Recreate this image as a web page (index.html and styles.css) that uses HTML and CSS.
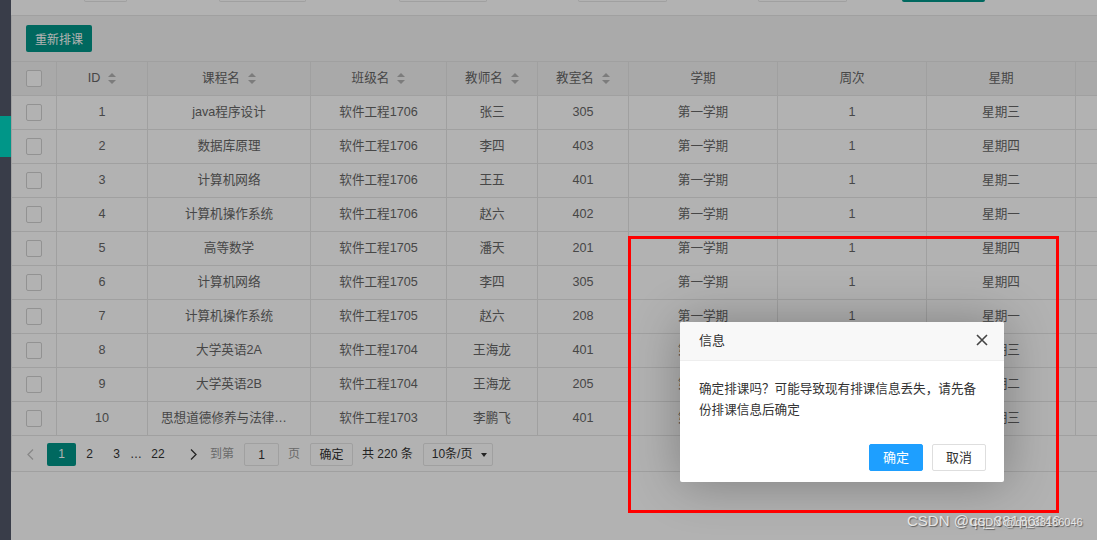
FILE: index.html
```html
<!DOCTYPE html>
<html lang="zh-CN">
<head>
    <meta charset="UTF-8">
    <title>排课管理</title>
    <link rel="stylesheet" href="styles.css">
</head>
<body>

<!-- left nav (outside the dialog's shade) -->
<aside class="sidebar"><div class="side-active"></div></aside>

<main class="content">
    <!-- bottom of the search form, scrolled away -->
    <div class="top-strip">
        <span class="edge edge-a"></span>
        <span class="edge edge-b"></span>
        <span class="edge edge-c"></span>
        <span class="edge edge-d"></span>
        <span class="edge edge-e"></span>
        <span class="edge-btn"></span>
    </div>

    <div class="table-box">
        <div class="toolbar"><button class="btn-teal">重新排课</button></div>

        <div class="row head">
            <div class="cell check"><span class="checkbox"></span></div>
            <div class="cell th">ID<span class="sort"></span></div>
            <div class="cell th">课程名<span class="sort"></span></div>
            <div class="cell th">班级名<span class="sort"></span></div>
            <div class="cell th">教师名<span class="sort"></span></div>
            <div class="cell th">教室名<span class="sort"></span></div>
            <div class="cell th">学期</div>
            <div class="cell th">周次</div>
            <div class="cell th">星期</div>
            <div class="cell th"></div>
        </div>

        <div class="row">
            <div class="cell check"><span class="checkbox"></span></div>
            <div class="cell">1</div><div class="cell">java程序设计</div><div class="cell">软件工程1706</div><div class="cell">张三</div><div class="cell">305</div><div class="cell">第一学期</div><div class="cell">1</div><div class="cell">星期三</div><div class="cell"></div>
        </div>
        <div class="row">
            <div class="cell check"><span class="checkbox"></span></div>
            <div class="cell">2</div><div class="cell">数据库原理</div><div class="cell">软件工程1706</div><div class="cell">李四</div><div class="cell">403</div><div class="cell">第一学期</div><div class="cell">1</div><div class="cell">星期四</div><div class="cell"></div>
        </div>
        <div class="row">
            <div class="cell check"><span class="checkbox"></span></div>
            <div class="cell">3</div><div class="cell">计算机网络</div><div class="cell">软件工程1706</div><div class="cell">王五</div><div class="cell">401</div><div class="cell">第一学期</div><div class="cell">1</div><div class="cell">星期二</div><div class="cell"></div>
        </div>
        <div class="row">
            <div class="cell check"><span class="checkbox"></span></div>
            <div class="cell">4</div><div class="cell">计算机操作系统</div><div class="cell">软件工程1706</div><div class="cell">赵六</div><div class="cell">402</div><div class="cell">第一学期</div><div class="cell">1</div><div class="cell">星期一</div><div class="cell"></div>
        </div>
        <div class="row">
            <div class="cell check"><span class="checkbox"></span></div>
            <div class="cell">5</div><div class="cell">高等数学</div><div class="cell">软件工程1705</div><div class="cell">潘天</div><div class="cell">201</div><div class="cell">第一学期</div><div class="cell">1</div><div class="cell">星期四</div><div class="cell"></div>
        </div>
        <div class="row">
            <div class="cell check"><span class="checkbox"></span></div>
            <div class="cell">6</div><div class="cell">计算机网络</div><div class="cell">软件工程1705</div><div class="cell">李四</div><div class="cell">305</div><div class="cell">第一学期</div><div class="cell">1</div><div class="cell">星期四</div><div class="cell"></div>
        </div>
        <div class="row">
            <div class="cell check"><span class="checkbox"></span></div>
            <div class="cell">7</div><div class="cell">计算机操作系统</div><div class="cell">软件工程1705</div><div class="cell">赵六</div><div class="cell">208</div><div class="cell">第一学期</div><div class="cell">1</div><div class="cell">星期一</div><div class="cell"></div>
        </div>
        <div class="row">
            <div class="cell check"><span class="checkbox"></span></div>
            <div class="cell">8</div><div class="cell">大学英语2A</div><div class="cell">软件工程1704</div><div class="cell">王海龙</div><div class="cell">401</div><div class="cell">第一学期</div><div class="cell">1</div><div class="cell">星期三</div><div class="cell"></div>
        </div>
        <div class="row">
            <div class="cell check"><span class="checkbox"></span></div>
            <div class="cell">9</div><div class="cell">大学英语2B</div><div class="cell">软件工程1704</div><div class="cell">王海龙</div><div class="cell">205</div><div class="cell">第一学期</div><div class="cell">1</div><div class="cell">星期二</div><div class="cell"></div>
        </div>
        <div class="row">
            <div class="cell check"><span class="checkbox"></span></div>
            <div class="cell">10</div><div class="cell">思想道德修养与法律基础</div><div class="cell">软件工程1703</div><div class="cell">李鹏飞</div><div class="cell">401</div><div class="cell">第一学期</div><div class="cell">1</div><div class="cell">星期三</div><div class="cell"></div>
        </div>

        <!-- pagination -->
        <div class="pager">
            <span class="pg-prev"><svg width="7" height="11" viewBox="0 0 7 11"><path d="M6 0.5L1 5.5L6 10.5" fill="none" stroke="#c2c2c2" stroke-width="1.3"/></svg></span>
            <span class="pg-cur">1</span>
            <span class="pg-num">2</span>
            <span class="pg-num">3</span>
            <span class="pg-dots">…</span>
            <span class="pg-num pg-last">22</span>
            <span class="pg-next"><svg width="7" height="11" viewBox="0 0 7 11"><path d="M1 0.5L6 5.5L1 10.5" fill="none" stroke="#333" stroke-width="1.3"/></svg></span>
            <span class="pg-label">到第</span>
            <span class="pg-input">1</span>
            <span class="pg-label pg-page">页</span>
            <span class="pg-go">确定</span>
            <span class="pg-count">共 220 条</span>
            <span class="pg-select">10条/页<i class="caret"></i></span>
        </div>
    </div>

    <div class="shade"></div>
</main>

<!-- confirm dialog -->
<div class="dialog">
    <div class="dialog-title">
        <span>信息</span>
        <svg class="dialog-close" width="12" height="12" viewBox="0 0 12 12"><path d="M1 1L11 11M11 1L1 11" stroke="#444" stroke-width="1.6"/></svg>
    </div>
    <div class="dialog-body">确定排课吗？可能导致现有排课信息丢失，请先备份排课信息后确定</div>
    <div class="dialog-btns">
        <span class="btn-ok">确定</span>
        <span class="btn-cancel">取消</span>
    </div>
</div>

<div class="mark-box"></div>
<div class="watermark"><span>CSDN @qq_38186046</span><span class="wm-2">CSDN @qq_38186046</span></div>

</body>
</html>
```

FILE: styles.css
```css
* { box-sizing: border-box; }
body { margin: 0; height: 540px; overflow: hidden; display: flex; background: #fff; font-family: "Liberation Sans", "Noto Sans CJK SC", sans-serif; font-size: 12.6px; color: #666; }

.sidebar { width: 11px; flex: none; background: #393D49; }
.side-active { margin-top: 116px; height: 41px; background: #009688; }

.content { position: relative; flex: 1; overflow: hidden; }

.top-strip { height: 15px; display: flex; align-items: flex-start; }
.edge { height: 2px; border: 1px solid #e6e6e6; border-top: none; border-radius: 0 0 2px 2px; }
.edge-a { margin-left: 73px; width: 43px; }
.edge-b { margin-left: 92px; width: 87px; }
.edge-c { margin-left: 93px; width: 88px; }
.edge-d { margin-left: 91px; width: 89px; }
.edge-e { margin-left: 91px; width: 89px; }
.edge-btn { margin-left: 55px; width: 83px; height: 2px; background: #009688; border-radius: 0 0 2px 2px; }

.table-box { border-left: 1px solid #e6e6e6; overflow: hidden; }
.toolbar { padding: 9px 14px; border-top: 1px solid #e6e6e6; border-bottom: 1px solid #e6e6e6; background: #f4f4f4; }
.btn-teal { display: block; height: 27px; padding: 0 9px; border: none; border-radius: 2px; background: #009688; color: #fff; font-family: inherit; font-size: 12px; }

.row { display: grid; grid-template-columns: 45px 91px 163px 136px 91px 91px 149px 149px 149px 149px; border-bottom: 1px solid #e6e6e6; background: #fff; }
.row.head { background: #f2f2f2; }
.cell { height: 33px; line-height: 33px; padding: 0 13px; border-right: 1px solid #e6e6e6; text-align: center; white-space: nowrap; overflow: hidden; text-overflow: ellipsis; }
.cell.th { display: flex; align-items: center; justify-content: center; gap: 8px; }
.cell.check { display: flex; align-items: center; justify-content: center; padding: 0; }
.checkbox { width: 16px; height: 17px; border: 1px solid #d2d2d2; border-radius: 2px; background: #fff; }

.sort { display: inline-flex; flex-direction: column; gap: 3px; }
.sort::before, .sort::after { content: ""; border: 4px solid transparent; }
.sort::before { border-top-width: 0; border-bottom-color: #b2b2b2; }
.sort::after { border-bottom-width: 0; border-top-color: #b2b2b2; }

.pager { display: flex; align-items: center; padding: 7px 0 5px 8px; border-bottom: 1px solid #e6e6e6; font-size: 12px; color: #333; }
.pager > span { height: 23px; line-height: 23px; text-align: center; }
.pg-prev, .pg-next { width: 20px; display: flex; align-items: center; justify-content: center; }
.pg-next { margin-left: 9px; }
.pg-cur { margin-left: 7px; width: 29px; background: #009688; color: #fff; border-radius: 2px; }
.pg-num { width: 27px; }
.pg-dots { width: 12px; }
.pg-last { width: 32px; }
.pg-label { margin-left: 7px; color: #999; }
.pg-page { margin-left: 9px; }
.pg-input { margin-left: 10px; width: 35px; border: 1px solid #e6e6e6; border-radius: 2px; background: #fff; }
.pg-go { margin-left: 10px; width: 43px; border: 1px solid #e6e6e6; border-radius: 2px; background: #fff; }
.pg-count { margin-left: 9px; }
.pg-select { margin-left: 10px; width: 70px; display: flex; align-items: center; padding-left: 8px; border: 1px solid #e6e6e6; border-radius: 2px; background: #fff; }
.caret { margin-left: 9px; border: 3px solid transparent; border-top: 4px solid #333; border-bottom: none; }

.shade { position: absolute; top: 0; left: 0; right: 0; bottom: 0; background: rgba(0, 0, 0, 0.3); }

.dialog { position: absolute; left: 680px; top: 322px; width: 324px; background: #fff; border-radius: 2px; box-shadow: 1px 1px 50px rgba(0, 0, 0, 0.3); font-size: 12.6px; color: #333; z-index: 10; }
.dialog-title { height: 39px; display: flex; align-items: center; justify-content: space-between; padding: 0 16px 3px 19px; background: #f8f8f8; border-bottom: 1px solid #eee; border-radius: 2px 2px 0 0; font-size: 13px; }
.dialog-body { padding: 18px 22px 18px 19px; line-height: 21px; }
.dialog-btns { display: flex; justify-content: flex-end; gap: 9px; padding: 5px 18px 11px; }
.btn-ok, .btn-cancel { height: 27px; line-height: 25px; padding: 0 13px; border: 1px solid #dedede; border-radius: 2px; font-size: 13px; }
.btn-ok { background: #1E9FFF; border-color: #1E9FFF; color: #fff; }
.btn-cancel { background: #fff; color: #333; }

.mark-box { position: absolute; left: 628px; top: 236px; width: 431px; height: 277px; border: 3px solid #f00; z-index: 20; }

.watermark { position: absolute; left: 907px; top: 512px; white-space: nowrap; font-family: "Liberation Sans", sans-serif; font-size: 15px; line-height: 18px; color: #e6e6e6; text-shadow: 1px 1px 1px rgba(0, 0, 0, 0.45); z-index: 30; }
.wm-2 { position: absolute; left: 63px; top: 1px; font-size: 11px; }
```
